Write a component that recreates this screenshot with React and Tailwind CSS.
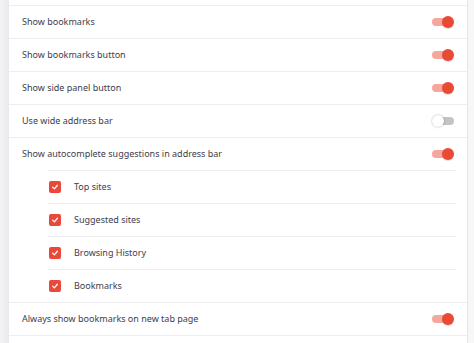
import React from "react";

function Toggle({ on }) {
  if (on) {
    return (
      <div className="relative w-[22px] h-[12px] flex items-center">
        <div className="w-[19px] h-[8px] rounded-full bg-[#f6a79c]" />
        <div className="absolute right-0 top-0 w-[12px] h-[12px] rounded-full bg-[#ea4a35] shadow-[0_1px_1px_rgba(0,0,0,0.15)]" />
      </div>
    );
  }
  return (
    <div className="relative w-[22px] h-[12px] flex items-center justify-end">
      <div className="w-[19px] h-[8px] rounded-full bg-[#c4c4c8]" />
      <div className="absolute left-0 top-0 w-[12px] h-[12px] rounded-full bg-white shadow-[0_0_2px_rgba(0,0,0,0.35)]" />
    </div>
  );
}

function Check() {
  return (
    <div className="w-[12px] h-[12px] rounded-[2px] bg-[#e8493a] flex items-center justify-center">
      <svg width="8" height="8" viewBox="0 0 10 10" fill="none">
        <path d="M2 5.2 L4.2 7.3 L8 2.8" stroke="white" strokeWidth="1.6" strokeLinecap="round" strokeLinejoin="round" />
      </svg>
    </div>
  );
}

function Row({ label, on }) {
  return (
    <div className="h-[33px] border-t border-[#eeeef0] flex items-center justify-between pl-[13px] pr-[13px]">
      <span>{label}</span>
      <Toggle on={on} />
    </div>
  );
}

function SubRow({ label }) {
  return (
    <div className="h-[33px] border-t border-[#eeeef0] flex items-center gap-[13px] pl-px">
      <Check />
      <span>{label}</span>
    </div>
  );
}

export default function App() {
  return (
    <div
      className="w-[474px] h-[343px] flex bg-white text-[9px] text-[#3d3d4c] overflow-hidden"
      style={{ fontFamily: "'Noto Sans', Lato, sans-serif" }}
    >
      <div className="w-[9px] bg-gradient-to-r from-[#f3f3f5] to-[#e9e9ec] shrink-0" />
      <div className="flex-1 bg-white border-r border-[#e6e6e9] pt-[5px]">
        <Row label="Show bookmarks" on />
        <Row label="Show bookmarks button" on />
        <Row label="Show side panel button" on />
        <Row label="Use wide address bar" on={false} />
        <Row label="Show autocomplete suggestions in address bar" on />
        <div className="ml-[39px] mr-[11px]">
          <SubRow label="Top sites" />
          <SubRow label="Suggested sites" />
          <SubRow label="Browsing History" />
          <SubRow label="Bookmarks" />
        </div>
        <Row label="Always show bookmarks on new tab page" on />
        <div className="border-t border-[#eeeef0]" />
      </div>
      <div className="w-[6px] bg-[#f7f7f8] shrink-0" />
    </div>
  );
}
